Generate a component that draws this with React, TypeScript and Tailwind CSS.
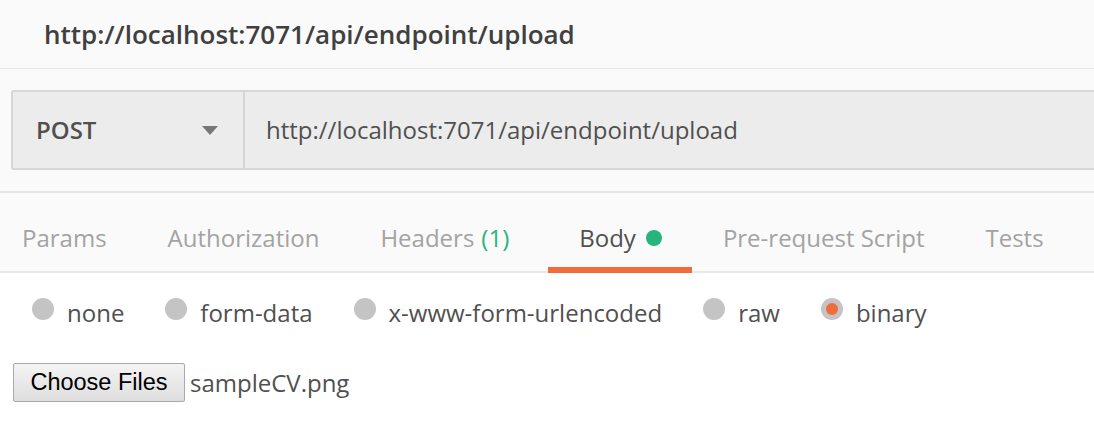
import React from "react";

const font = { fontFamily: '"Open Sans", "Noto Sans", sans-serif' };

function Radio({ label, checked }: { label: string; checked?: boolean }) {
  return (
    <div className="flex items-start gap-[13px]">
      <span className="mt-[1px] flex h-[22px] w-[22px] items-center justify-center rounded-full bg-[#c4c4c4]">
        {checked && <span className="h-[12px] w-[12px] rounded-full bg-[#f26b3a]" />}
      </span>
      <span className="text-[24px] leading-[32px] text-[#505050]">{label}</span>
    </div>
  );
}

function Tab({ children, active, extra }: { children: React.ReactNode; active?: boolean; extra?: string }) {
  return (
    <div
      className={
        "flex h-[80px] items-start pl-[31px] pt-[29px] " +
        (extra ?? "pr-[30px] ") +
        " " +
        (active ? "border-b-[6px] border-[#f26b3a] text-[#505050]" : "text-[#a3a3a3]")
      }
    >
      <span className="flex items-center text-[24px] leading-[32px]">{children}</span>
    </div>
  );
}

export default function App() {
  return (
    <div className="h-[421px] w-[1094px] overflow-hidden bg-white" style={font}>
      <div className="flex h-[69px] items-center border-b border-[#e6e6e6] bg-[#fafafa] pl-[44px]">
        <span className="text-[26px] font-semibold leading-[34px] text-[#404040]">
          http://localhost:7071/api/endpoint/upload
        </span>
      </div>
      <div className="border-b-2 border-[#e6e6e6] bg-[#fafafa] pb-[21px] pl-[11px] pt-[21px]">
        <div className="flex h-[80px] w-[1200px] rounded-[3px] border-2 border-[#d6d6d6] bg-[#ececec]">
          <div className="flex w-[232px] items-center justify-between border-r-2 border-[#d6d6d6] pl-[23px] pr-[25px]">
            <span className="text-[24px] font-semibold text-[#505050]">POST</span>
            <svg width="16" height="9" viewBox="0 0 16 9">
              <path d="M0 0 H16 L8 9 Z" fill="#777777" />
            </svg>
          </div>
          <div className="flex items-center pl-[21px]">
            <span className="text-[24px] text-[#505050]">http://localhost:7071/api/endpoint/upload</span>
          </div>
        </div>
      </div>
      <div className="border-b-2 border-[#e8e8e8] bg-[#fafafa]">
        <div className="-mb-[2px] ml-[-9px] flex">
          <Tab>Params</Tab>
          <Tab>Authorization</Tab>
          <Tab extra="pr-[39px]">
            Headers <span className="ml-[7px] text-[#26b47f]">(1)</span>
          </Tab>
          <Tab active>
            Body <span className="ml-[10px] inline-block h-[16px] w-[16px] rounded-full bg-[#26b47f]" />
          </Tab>
          <Tab>Pre-request Script</Tab>
          <Tab>Tests</Tab>
        </div>
      </div>
      <div className="flex gap-[41px] pl-[32px] pt-[24px]">
        <Radio label="none" />
        <Radio label="form-data" />
        <Radio label="x-www-form-urlencoded" />
        <Radio label="raw" />
        <Radio label="binary" checked />
      </div>
      <div className="flex items-center gap-[5px] pl-[13px] pt-[34px]">
        <button
          className="h-[39px] w-[172px] rounded-[2px] border border-[#a9a9a9] bg-gradient-to-b from-[#f4f4f4] to-[#dedede] text-[23.5px] leading-[37px] text-black"
          style={{ fontFamily: '"Liberation Sans", Arial, sans-serif' }}
        >
          Choose Files
        </button>
        <span className="text-[24px] text-[#505050]">sampleCV.png</span>
      </div>
    </div>
  );
}
